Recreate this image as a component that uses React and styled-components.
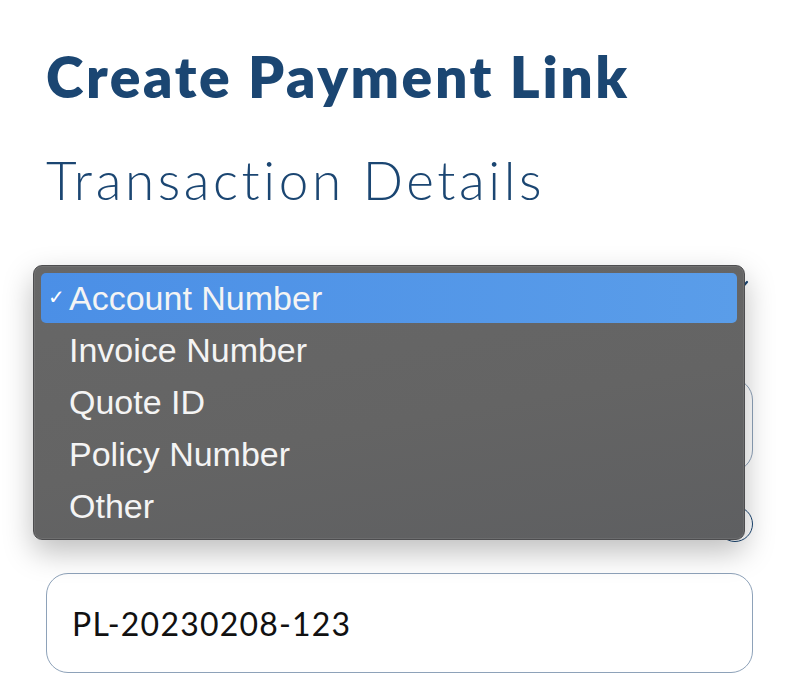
import React from 'react';
import styled, { createGlobalStyle } from 'styled-components';

const GlobalStyle = createGlobalStyle`
  html, body {
    margin: 0;
    padding: 0;
    background: #ffffff;
  }
  body {
    font-family: Lato, "Liberation Sans", sans-serif;
  }
`;

const Page = styled.div`
  width: 798px;
  height: 692px;
  overflow: hidden;
  box-sizing: border-box;
  padding: 0 45px 0 46px;
  background: #ffffff;
`;

const Title = styled.h1`
  margin: 0;
  padding-top: 44px;
  font-family: Lato, sans-serif;
  font-weight: 800;
  font-size: 57px;
  line-height: 64px;
  color: #1b4672;
  letter-spacing: 2.6px;
  white-space: nowrap;
`;

const Subtitle = styled.h2`
  margin: 42px 0 0;
  font-family: Lato, sans-serif;
  font-weight: 300;
  font-size: 53px;
  line-height: 60px;
  color: #1b4672;
  letter-spacing: 3.6px;
  white-space: nowrap;
`;

const Fields = styled.div`
  position: relative;
  display: flex;
  flex-direction: column;
  margin-top: 47px;
`;

const SelectRow = styled.div`
  height: 60px;
  display: flex;
  align-items: center;
  justify-content: flex-end;
  padding-right: 4px;
`;

const InputBox = styled.div`
  box-sizing: border-box;
  height: ${p => p.$height}px;
  margin-top: ${p => p.$offset}px;
  border: 1.5px solid #8ea2b9;
  border-radius: 22px;
  display: flex;
  align-items: center;
  padding-left: 25px;
  font-family: Lato, sans-serif;
  font-size: 32px;
  color: #111111;
  letter-spacing: 1.2px;
`;

const ToggleRow = styled.div`
  height: 36px;
  margin-top: 34px;
  display: flex;
  justify-content: flex-end;
`;

const Circle = styled.div`
  box-sizing: border-box;
  width: 36px;
  height: 36px;
  border-radius: 50%;
  border: 1.5px solid #1b4672;
`;

const Menu = styled.div`
  position: absolute;
  top: 8px;
  left: -13px;
  right: 8px;
  box-sizing: border-box;
  height: 275px;
  padding: 7px 7px;
  border-radius: 9px;
  border: 1px solid #4d4d4f;
  background: linear-gradient(170deg, #676767 0%, #646464 55%, #5e5f61 100%);
  box-shadow: 0 12px 30px rgba(0, 0, 0, 0.26), inset 0 0 0 1px rgba(255, 255, 255, 0.08);
  display: flex;
  flex-direction: column;
  gap: 2px;
`;

const Option = styled.div`
  position: relative;
  height: 50px;
  flex: none;
  border-radius: 5px;
  display: flex;
  align-items: center;
  padding-left: 28px;
  font-family: "Liberation Sans", Arial, sans-serif;
  font-size: 34px;
  color: #f4f4f4;
  background: ${p => (p.$active ? 'linear-gradient(90deg, #4b8fe6 0%, #5a9de9 100%)' : 'transparent')};
`;

const Check = styled.span`
  position: absolute;
  left: 7px;
  top: 14px;
  font-size: 20px;
  line-height: 20px;
  color: #ffffff;
`;

const options = ['Account Number', 'Invoice Number', 'Quote ID', 'Policy Number', 'Other'];

const Chevron = () => (
  <svg width="20" height="14" viewBox="0 0 20 14" fill="none">
    <path d="M2 3 L10 11 L18 2" stroke="#1b4672" strokeWidth="2.2" strokeLinecap="round" strokeLinejoin="round" />
  </svg>
);

export default function App() {
  return (
    <Page>
      <GlobalStyle />
      <Title>Create Payment Link</Title>
      <Subtitle>Transaction Details</Subtitle>
      <Fields>
        <SelectRow>
          <Chevron />
        </SelectRow>
        <InputBox $height={94} $offset={61} />
        <ToggleRow>
          <Circle />
        </ToggleRow>
        <InputBox $height={100} $offset={31}>PL-20230208-123</InputBox>
        <Menu>
          {options.map((o, i) => (
            <Option key={o} $active={i === 0}>
              {i === 0 && <Check>✓</Check>}
              {o}
            </Option>
          ))}
        </Menu>
      </Fields>
    </Page>
  );
}
